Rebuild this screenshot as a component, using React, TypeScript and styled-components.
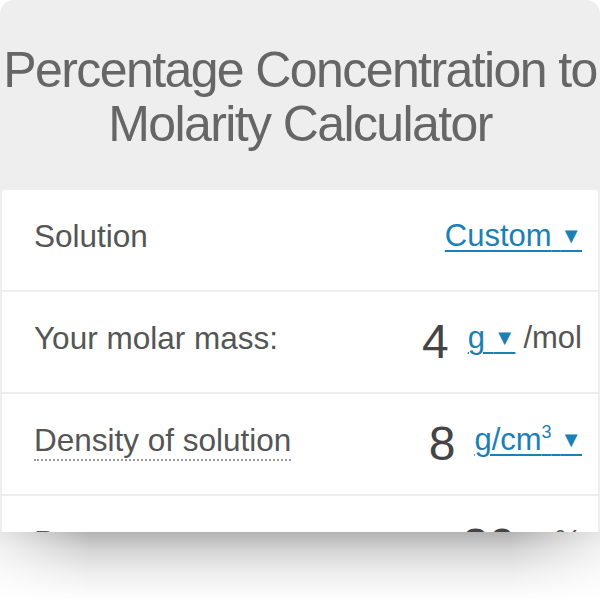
import * as React from 'react';
import styled, { createGlobalStyle } from 'styled-components';

const GlobalStyle = createGlobalStyle`
  body {
    margin: 0;
    background: #ffffff;
    font-family: "Liberation Sans", Arial, sans-serif;
  }
`;

interface Field {
  label: string;
  hint?: boolean;
  value?: string;
  unit?: React.ReactNode;
  suffix?: string;
}

const fields: Field[] = [
  { label: 'Solution', unit: 'Custom' },
  { label: 'Your molar mass:', value: '4', unit: 'g', suffix: '/mol' },
  { label: 'Density of solution', hint: true, value: '8', unit: <>g/cm<sup>3</sup></> },
  { label: 'Percentage', value: '20', suffix: '%' },
];

export default function App() {
  return (
    <>
      <GlobalStyle />
      <Page>
        <Widget>
          <Title>
            Percentage Concentration to
            <br />
            Molarity Calculator
          </Title>
          <Card>
            {fields.map((f) => (
              <Row key={f.label}>
                <Label $hint={f.hint}>{f.label}</Label>
                <Value>
                  {f.value && <NumberInput>{f.value}</NumberInput>}
                  {f.unit && (
                    <UnitSelect>
                      {f.unit}
                      {'\u00a0'}
                      <Caret>{'\u25BC'}</Caret>
                    </UnitSelect>
                  )}
                  {f.suffix && <Suffix $plain={!f.unit}>{f.suffix}</Suffix>}
                </Value>
              </Row>
            ))}
          </Card>
        </Widget>
        <Shade />
      </Page>
    </>
  );
}

const Page = styled.div`
  width: 600px;
  height: 600px;
  overflow: hidden;
`;

const Widget = styled.div`
  height: 532px;
  overflow: hidden;
  background: #eeeeee;
  border-radius: 14px 14px 0 0;
  padding: 0 2px;
`;

const Title = styled.h1`
  margin: 0;
  padding: 43px 0 39px;
  font-size: 50px;
  font-weight: normal;
  line-height: 54px;
  letter-spacing: -1.6px;
  color: #666666;
  text-align: center;
  white-space: nowrap;
`;

const Card = styled.div`
  display: flex;
  flex-direction: column;
  gap: 2px;
  border-radius: 3px 3px 0 0;
  overflow: hidden;
`;

const Row = styled.div`
  flex: none;
  height: 100px;
  box-sizing: border-box;
  display: flex;
  align-items: center;
  justify-content: space-between;
  padding: 0 16px 8px 32px;
  background: #ffffff;
`;

const Label = styled.span<{ $hint?: boolean }>`
  font-size: 31.5px;
  color: #555555;
  line-height: 36px;
  ${({ $hint }) => $hint && `
    border-bottom: 2px dotted #999999;
    padding-bottom: 1px;
    margin-bottom: -3px;
  `}
`;

const Value = styled.div`
  display: flex;
  align-items: center;
`;

const NumberInput = styled.span`
  font-size: 48px;
  line-height: 48px;
  padding-top: 8px;
  color: #444444;
  margin-right: 19px;
`;

const UnitSelect = styled.span`
  font-size: 31px;
  line-height: 36px;
  color: #1a80b6;
  text-decoration: underline;
  text-decoration-thickness: 2px;
  text-underline-offset: 4px;
  white-space: nowrap;

  sup {
    font-size: 18px;
    vertical-align: 12px;
    line-height: 0;
  }
`;

const Caret = styled.span`
  font-size: 22px;
  vertical-align: 3px;
`;

const Suffix = styled.span<{ $plain?: boolean }>`
  font-size: 31px;
  line-height: 36px;
  color: #555555;
  margin-left: ${({ $plain }) => ($plain ? '20px' : '8px')};
`;

const Shade = styled.div`
  height: 68px;
  background: linear-gradient(
    to bottom,
    rgba(0, 0, 0, 0.3),
    rgba(0, 0, 0, 0.17) 18px,
    rgba(0, 0, 0, 0.07) 40px,
    rgba(0, 0, 0, 0) 68px
  );
  mask-image: linear-gradient(
    to right,
    rgba(0, 0, 0, 0.3),
    #000 90px,
    #000 510px,
    rgba(0, 0, 0, 0.3)
  );
`;
